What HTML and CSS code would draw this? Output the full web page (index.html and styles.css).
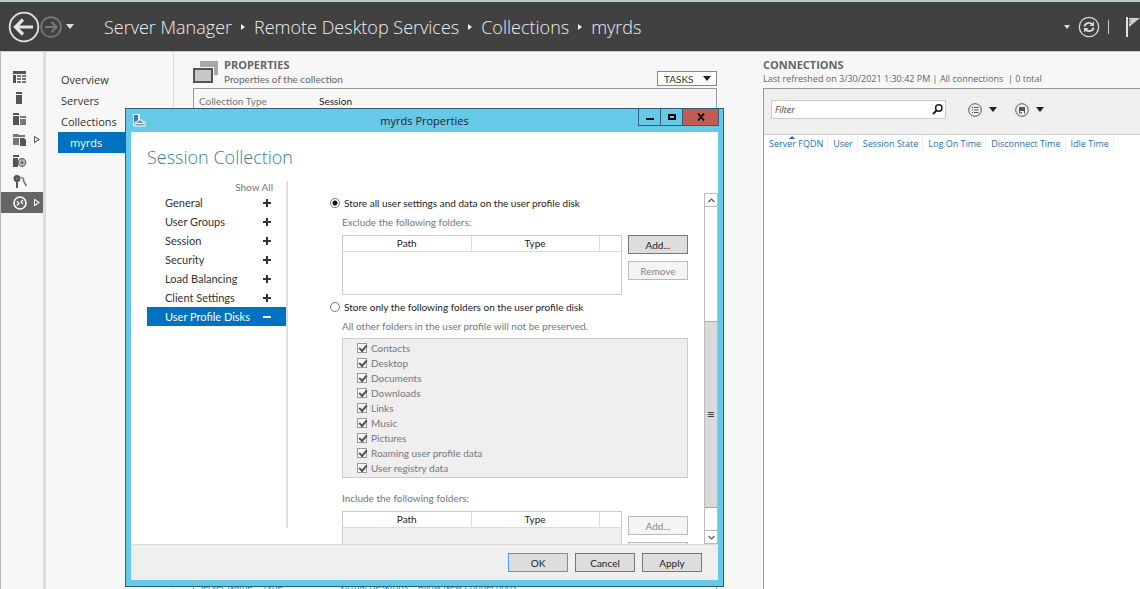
FILE: index.html
```html
<!DOCTYPE html>
<html lang="en">
<head>
  <meta charset="UTF-8">
  <title>Server Manager</title>
  <link rel="stylesheet" href="styles.css">
</head>
<body>
  <!-- Top bar -->
  <header class="topbar">
    <button class="icon-btn" aria-label="Back">
      <svg width="32" height="32" viewBox="0 0 32 32" fill="none" stroke="#e4e4e4">
        <circle cx="16" cy="16" r="14.3" stroke-width="1.8"/>
        <path d="M7.5 16H25M15 8.5L7.5 16l7.500 7.500" stroke-width="3.200"/>
      </svg>
    </button>
    <button class="icon-btn" aria-label="Forward">
      <svg width="22" height="22" viewBox="0 0 20 20" fill="none" stroke="#777">
        <circle cx="10" cy="10" r="9" stroke-width="1.600"/>
        <path d="M4.500 10h10.500M10.500 5.500L15 10l-4.500 4.500" stroke-width="2"/>
      </svg>
    </button>
    <button class="icon-btn history" aria-label="History"><i class="caret light"></i></button>
    <nav class="crumbs">
      <a href="#">Server Manager</a><i class="crumb-arrow"></i>
      <a href="#">Remote Desktop Services</a><i class="crumb-arrow"></i>
      <a href="#">Collections</a><i class="crumb-arrow"></i>
      <a href="#">myrds</a>
    </nav>
    <div class="top-tools">
      <i class="caret light small"></i>
      <button class="icon-btn" aria-label="Refresh">
        <svg width="22" height="22" viewBox="0 0 22 22" fill="none" stroke="#d8d8d8">
          <circle cx="11" cy="11" r="9.700" stroke-width="1.300"/>
          <path d="M6.500 10.500c.5-3.500 5-5 8-2M15.500 11.500c-.5 3.500-5 5-8 2" stroke-width="1.900"/>
          <path d="M16 5.500v4.500h-4.500zM6 16.500V12h4.500z" fill="#d8d8d8" stroke="none"/>
        </svg>
      </button>
      <span class="divider"></span>
      <button class="icon-btn flag" aria-label="Notifications">
        <svg width="14" height="20" viewBox="0 0 14 20">
          <path d="M1 0v20" stroke="#e0e0e0" stroke-width="2"/>
          <path d="M3 1h11L3 10z" fill="#d0d0d0"/>
          <path d="M4 2v5" stroke="#777"/>
        </svg>
      </button>
    </div>
  </header>

  <main class="workspace">
    <!-- Icon rail -->
    <nav class="rail">
      <a href="#" aria-label="Dashboard"><svg width="14" height="12" viewBox="0 0 14 12" fill="#555"><path d="M0 0h13v3H0zM0 4h3v8H0z"/><path fill="#777" d="M4 4h4v2H4zM9 4h4v2H9zM4 7h4v2H4zM9 7h4v2H9zM4 10h4v2H4zM9 10h4v2H9z"/></svg></a>
      <a href="#" aria-label="Local Server"><svg width="14" height="12" viewBox="0 0 14 12" fill="#555"><path d="M3 0h6v2H3zM3 3h6v9H3z"/></svg></a>
      <a href="#" aria-label="All Servers"><svg width="14" height="12" viewBox="0 0 14 12" fill="#555"><path d="M0 0h6v2H0zM0 3h6v9H0z"/><path fill="#777" d="M7 3h6v2H7zM7 6h6v6H7z"/></svg></a>
      <a href="#" aria-label="File and Storage Services"><svg width="14" height="12" viewBox="0 0 14 12" fill="#777"><path d="M0 0h5l1 1h6v2H0zM0 4h6v7H0z"/><path fill="#555" d="M7 4h4l2 2v6H7z"/></svg><i class="expand"></i></a>
      <a href="#" aria-label="IIS"><svg width="14" height="12" viewBox="0 0 14 12"><path fill="#555" d="M0 0h6v2H0zM0 3h5v9H0z"/><circle cx="9" cy="7.500" r="3.800" fill="#bbb" stroke="#666" stroke-width="1.200"/><circle cx="9" cy="7.500" r="1.500" fill="#666"/></svg></a>
      <a href="#" aria-label="Policies"><svg width="14" height="13" viewBox="0 0 14 13" fill="none" stroke="#555"><circle cx="4" cy="3.500" r="2" stroke-width="3"/><path d="M4 5v8" stroke-width="2"/><path d="M8 2l2.500 2v2l3 5" stroke="#777" stroke-width="1.600"/></svg></a>
      <a href="#" class="active" aria-label="Remote Desktop Services"><svg width="14" height="14" viewBox="0 0 14 14" fill="none" stroke="#fff"><circle cx="7" cy="7" r="6" stroke-width="1.600"/><path d="M4 5.500L6 7.500 4 9.500M10 4L8 6l2 2" stroke-width="1.200"/></svg><i class="expand"></i></a>
    </nav>

    <nav class="sidenav">
      <a href="#">Overview</a>
      <a href="#">Servers</a>
      <a href="#">Collections</a>
      <a href="#" class="active">myrds</a>
    </nav>

    <!-- Properties tile -->
    <section class="properties">
      <div class="tile-head">
        <svg class="tile-icon" width="26" height="23" viewBox="0 0 26 23">
          <path d="M7 0h18v14H7z" fill="#a8a8a8"/>
          <path d="M1 8h18v13H1z" fill="#c8c8c8" stroke="#f7f7f7" stroke-width="4"/>
          <path d="M1 8h18v13H1z" fill="#c8c8c8" stroke="#555" stroke-width="2"/>
        </svg>
        <div class="tile-title">
          <h2>PROPERTIES</h2>
          <p>Properties of the collection</p>
        </div>
        <button class="tasks">TASKS <i class="caret"></i></button>
      </div>
      <div class="tile-box">
        <dl class="facts">
          <dt>Collection Type</dt>
          <dd>Session</dd>
        </dl>
        <div class="host-head">
          <span>Server Name</span><span class="wide">Type</span><span>Virtual Desktops</span><span>Allow New Connections</span>
        </div>
      </div>
    </section>

    <!-- Connections tile -->
    <section class="connections">
      <div class="tile-title">
        <h2>CONNECTIONS</h2>
        <p>Last refreshed on 3/30/2021 1:30:42 PM | All connections &nbsp;| 0 total</p>
      </div>
      <div class="conn-box">
        <div class="toolbar">
          <div class="filter">
            <input type="text" placeholder="Filter" aria-label="Filter">
            <svg width="11" height="11" viewBox="0 0 11 11" fill="none" stroke="#222"><circle cx="6.800" cy="4" r="3.200" stroke-width="1.500"/><path d="M4.500 6.500L1 10" stroke-width="2"/></svg>
          </div>
          <button class="icon-btn menu-btn" aria-label="View options">
            <svg width="14" height="14" viewBox="0 0 14 14" fill="none" stroke="#555"><circle cx="7" cy="7" r="6.300" stroke-width="1"/><path d="M4 4.500h1M6 4.500h4.500M4 7h1M6 7h4.500M4 9.500h1M6 9.500h4.500" stroke-width="1.200"/></svg>
            <i class="caret"></i>
          </button>
          <button class="icon-btn menu-btn" aria-label="Saved queries">
            <svg width="14" height="14" viewBox="0 0 14 14"><circle cx="7" cy="7" r="6.300" fill="none" stroke="#555"/><path d="M4 4h6v6.500H9V8H5v2.500H4zM5.500 9h1.500v1.500H5.500z" fill="#555"/></svg>
            <i class="caret"></i>
          </button>
        </div>
        <table class="conn-table">
          <thead>
            <tr>
              <th class="sorted">Server FQDN</th>
              <th>User</th>
              <th>Session State</th>
              <th>Log On Time</th>
              <th>Disconnect Time</th>
              <th>Idle Time</th>
            </tr>
          </thead>
        </table>
      </div>
    </section>
  </main>

  <!-- Properties dialog -->
  <div class="dialog" role="dialog" aria-labelledby="dialog-title">
    <div class="titlebar">
      <svg class="app-icon" width="13" height="13" viewBox="0 0 13 13">
        <path d="M0 0h7v12H0z" fill="#e8f4fb"/>
        <path d="M1 1h4v10H1z" fill="#2f7fc0"/>
        <path d="M2 12V8h2l1-2h4l1 2h2v4z" fill="#7d97a8" stroke="#fff" stroke-width="1"/>
        <path d="M3 9.500h8" stroke="#fff"/>
      </svg>
      <span id="dialog-title">myrds Properties</span>
      <div class="win-btns">
        <button aria-label="Minimize"><svg width="8" height="8" viewBox="0 0 8 8"><path d="M0 5h8v2H0z"/></svg></button>
        <button aria-label="Maximize"><svg width="8" height="8" viewBox="0 0 8 8"><path d="M1 2h6v4H1z" fill="none" stroke="#000" stroke-width="2"/></svg></button>
        <button class="close" aria-label="Close"><svg width="8" height="8" viewBox="0 0 8 8"><path d="M1 .5L7 7.500M7 .5L1 7.500" stroke="#000" stroke-width="1.800"/></svg></button>
      </div>
    </div>

    <div class="dialog-body">
      <h1>Session Collection</h1>
      <div class="columns">
        <nav class="steps">
          <a href="#" class="show-all">Show All</a>
          <a href="#">General <i class="plus"></i></a>
          <a href="#">User Groups <i class="plus"></i></a>
          <a href="#">Session <i class="plus"></i></a>
          <a href="#">Security <i class="plus"></i></a>
          <a href="#">Load Balancing <i class="plus"></i></a>
          <a href="#">Client Settings <i class="plus"></i></a>
          <a href="#" class="active">User Profile Disks <i class="plus minus"></i></a>
        </nav>

        <div class="pane">
          <div class="pane-content">
            <label class="option"><input type="radio" name="store" checked>Store all user settings and data on the user profile disk</label>
            <div class="group">
              <p>Exclude the following folders:</p>
              <div class="row">
                <div class="folder-list">
                  <table>
                    <thead><tr><th>Path</th><th>Type</th><th class="last"></th></tr></thead>
                  </table>
                </div>
                <div class="row-btns">
                  <button class="btn">Add...</button>
                  <button class="btn" disabled>Remove</button>
                </div>
              </div>
            </div>
            <label class="option"><input type="radio" name="store">Store only the following folders on the user profile disk</label>
            <div class="group">
              <p>All other folders in the user profile will not be preserved.</p>
              <div class="checks">
                <label><input type="checkbox" checked disabled>Contacts</label>
                <label><input type="checkbox" checked disabled>Desktop</label>
                <label><input type="checkbox" checked disabled>Documents</label>
                <label><input type="checkbox" checked disabled>Downloads</label>
                <label><input type="checkbox" checked disabled>Links</label>
                <label><input type="checkbox" checked disabled>Music</label>
                <label><input type="checkbox" checked disabled>Pictures</label>
                <label><input type="checkbox" checked disabled>Roaming user profile data</label>
                <label><input type="checkbox" checked disabled>User registry data</label>
              </div>
              <p class="include">Include the following folders:</p>
              <div class="row">
                <div class="folder-list off">
                  <table>
                    <thead><tr><th>Path</th><th>Type</th><th class="last"></th></tr></thead>
                  </table>
                </div>
                <div class="row-btns lower">
                  <button class="btn" disabled>Add...</button>
                  <button class="btn" disabled aria-label="Remove"></button>
                </div>
              </div>
            </div>
          </div>
          <div class="scrollbar">
            <button aria-label="Scroll up"><svg width="7" height="5" viewBox="0 0 7 5" fill="none" stroke="#555"><path d="M.5 4l3-3 3 3" stroke-width="1.200"/></svg></button>
            <div class="track"><div class="thumb"><i></i></div></div>
            <button aria-label="Scroll down"><svg width="7" height="5" viewBox="0 0 7 5" fill="none" stroke="#555"><path d="M.5 1l3 3 3-3" stroke-width="1.200"/></svg></button>
          </div>
        </div>
      </div>
    </div>

    <div class="dialog-footer">
      <button class="btn primary">OK</button>
      <button class="btn">Cancel</button>
      <button class="btn">Apply</button>
    </div>
  </div>
</body>
</html>
```
FILE: styles.css
```css
* {
  box-sizing: border-box;
}

body {
  margin: 0;
  height: 100vh;
  display: flex;
  flex-direction: column;
  overflow: hidden;
  position: relative;
  background: #f7f7f7;
  color: #333;
  font-family: Lato, "Open Sans", sans-serif;
  font-size: 10px;
  line-height: 14px;
}

h1, h2, .crumbs, .sidenav, .titlebar, .connections, .host-head {
  font-family: "Open Sans", "Noto Sans", sans-serif;
}

h1, h2, p, dl, dd {
  margin: 0;
}

a {
  color: inherit;
  text-decoration: none;
}

button, input {
  font: inherit;
  color: inherit;
}

.icon-btn {
  display: flex;
  align-items: center;
  padding: 0;
  border: none;
  background: none;
}

.caret {
  border: 4px solid transparent;
  border-top: 5px solid #222;
  border-bottom: none;
}

.caret.light {
  border-top-color: #ddd;
}

.caret.small {
  border-width: 4px 3px 0;
}

/* Top bar */
.topbar {
  display: flex;
  align-items: center;
  flex: none;
  height: 52px;
  padding-left: 8px;
  background: #414141;
  border-top: 2px solid #b9cdd0;
  border-bottom: 1px solid #ccc;
  color: #eee;
}

.history {
  margin-left: 4px;
}

.crumbs {
  display: flex;
  align-items: center;
  margin-left: 30px;
  font-size: 18px;
  font-weight: 300;
  line-height: 24px;
  white-space: nowrap;
}

.crumb-arrow {
  margin: 0 9px;
  border: 3px solid transparent;
  border-left: 4px solid #eee;
  border-right: none;
}

.top-tools {
  display: flex;
  align-items: center;
  gap: 8px;
  margin-left: auto;
}

.divider {
  width: 1px;
  height: 14px;
  background: #ccc;
}

.flag {
  margin-left: 9px;
}

/* Left navigation */
.workspace {
  display: flex;
  flex: 1;
  min-height: 0;
}

.rail {
  flex: none;
  width: 46px;
  padding-top: 14px;
  border-left: 1px solid #bbb;
  border-right: 3px solid #ddd;
}

.rail a {
  display: flex;
  align-items: center;
  height: 21px;
  padding-left: 12px;
}

.rail .active {
  background: #666;
}

.expand {
  width: 6px;
  height: 8px;
  margin-left: 7px;
  background: #666;
  clip-path: polygon(0 0, 100% 50%, 0 100%, 0 0, 1px 2px, 1px 6px, 4px 4px, 1px 2px);
}

.active .expand {
  background: #fff;
}

.sidenav {
  flex: none;
  width: 128px;
  padding: 17px 0 0 12px;
  border-right: 1px solid #ddd;
  font-size: 11px;
}

.sidenav a {
  display: block;
  height: 21px;
  padding-left: 3px;
  line-height: 21px;
}

.sidenav .active {
  padding-left: 12px;
  background: #0072c0;
  color: #fff;
}

/* Tiles */
.properties {
  display: flex;
  flex-direction: column;
  flex: 0 0 543px;
  padding: 6px 0 0 19px;
}

.tile-head {
  display: flex;
  height: 30px;
}

.tile-icon {
  margin: 3px 5px 0 0;
}

.tile-title {
  height: 30px;
  color: #666;
  white-space: nowrap;
}

.tile-title h2 {
  font-size: 11px;
  line-height: 14px;
}

.tasks {
  display: flex;
  align-items: center;
  justify-content: space-between;
  width: 60px;
  height: 15px;
  margin: 13px 0 0 auto;
  padding: 0 5px 0 6px;
  border: 1px solid #888;
  background: #fff;
}

.tile-box {
  display: flex;
  flex-direction: column;
  justify-content: space-between;
  flex: 1;
  border: 1px solid #999;
  border-bottom: none;
}

.facts {
  display: flex;
  padding: 5px;
}

.facts dt {
  width: 120px;
  color: #777;
}

.facts dd {
  color: #222;
}

.host-head {
  display: flex;
  gap: 10px;
  height: 9px;
  padding-left: 4px;
  color: #2a6fa8;
  font-size: 9px;
}

.host-head .wide {
  width: 67px;
}

.connections {
  display: flex;
  flex-direction: column;
  flex: 1;
  min-width: 0;
  margin-left: 46px;
  padding-top: 6px;
  font-size: 9px;
}

.conn-box {
  flex: 1;
  border-top: 1px solid #999;
  border-left: 1px solid #999;
  background: #fff;
}

.toolbar {
  display: flex;
  align-items: center;
  gap: 18px;
  height: 46px;
  padding: 0 0 4px 7px;
  background: #efefef;
  border-bottom: 1px solid #ccc;
}

.filter {
  display: flex;
  align-items: center;
  width: 175px;
  height: 19px;
  margin-right: 4px;
  padding-right: 2px;
  border: 1px solid #ccc;
  background: #fff;
}

.filter input {
  flex: 1;
  min-width: 0;
  padding: 0 3px;
  border: none;
  background: none;
}

.filter input::placeholder {
  color: #444;
  font-style: italic;
}

.menu-btn {
  gap: 7px;
}

.conn-table {
  border-collapse: collapse;
}

.conn-table th {
  position: relative;
  height: 18px;
  padding: 0 4px 0 5px;
  border-right: 1px solid #eee;
  color: #1f6fb5;
  font-weight: normal;
  white-space: nowrap;
}

.sorted::before {
  content: "";
  position: absolute;
  top: 1px;
  left: 40%;
  border: 3px solid transparent;
  border-top: none;
  border-bottom-color: #1f6fb5;
}

/* Dialog */
.dialog {
  position: absolute;
  top: 108px;
  left: 125px;
  display: flex;
  flex-direction: column;
  width: 599px;
  height: 479px;
  padding: 0 5px 6px;
  border: 1px solid #2d5f75;
  background: #66c9e8;
}

.titlebar {
  display: flex;
  align-items: center;
  justify-content: center;
  position: relative;
  flex: none;
  height: 23px;
  color: #222;
  font-size: 11px;
}

.app-icon {
  position: absolute;
  top: 5px;
  left: 2px;
}

.win-btns {
  display: flex;
  position: absolute;
  top: -1px;
  right: -1px;
}

.win-btns button {
  display: flex;
  align-items: center;
  justify-content: center;
  width: 23px;
  height: 18px;
  margin-left: -1px;
  padding: 0;
  border: 1px solid #2d5f75;
  background: none;
}

.win-btns .close {
  width: 37px;
  background: #c35b54;
}

.dialog-body {
  display: flex;
  flex-direction: column;
  flex: 1;
  min-height: 0;
  padding-left: 16px;
  background: #fff;
}

h1 {
  padding: 13px 0 12px;
  color: #35809f;
  font-size: 18px;
  font-weight: 300;
  line-height: 24px;
}

.columns {
  display: flex;
  flex: 1;
  min-height: 0;
}

.steps {
  flex: none;
  width: 141px;
  margin-bottom: 16px;
  border-right: 2px solid #ddd;
  font-size: 11px;
}

.steps a {
  display: flex;
  align-items: center;
  justify-content: space-between;
  height: 19px;
  padding: 0 15px 0 18px;
}

.steps .show-all {
  justify-content: flex-end;
  height: 12px;
  padding-right: 13px;
  color: #777;
  font-size: 10px;
}

.steps .active {
  background: #0072c0;
  color: #fff;
}

.plus {
  width: 8px;
  height: 8px;
  background:
    linear-gradient(currentColor, currentColor) center / 8px 2px no-repeat,
    linear-gradient(currentColor, currentColor) center / 2px 8px no-repeat;
}

.plus.minus {
  background: linear-gradient(currentColor, currentColor) center / 8px 2px no-repeat;
}

.pane {
  display: flex;
  flex: 1;
  min-width: 0;
  margin-top: 12px;
  padding-left: 42px;
}

.pane-content {
  flex: 1;
  overflow: hidden;
  padding: 3px 16px 0 0;
}

.option {
  display: flex;
  align-items: center;
  height: 14px;
  color: #222;
}

.option input {
  appearance: none;
  width: 10px;
  height: 10px;
  margin: 0 4px 0 0;
  border: 1px solid #777;
  border-radius: 50%;
  background: #fff;
}

.option input:checked {
  background: radial-gradient(circle, #111 0 2px, #fff 3px);
}

.group {
  padding: 5px 0 5px 12px;
  color: #777;
}

.row {
  display: flex;
  gap: 6px;
  margin-top: 6px;
}

.folder-list {
  flex: 1;
  height: 60px;
  border: 1px solid #ccc;
  background: #fff;
}

.folder-list.off {
  background: #efefef;
}

.folder-list table {
  width: 100%;
  table-layout: fixed;
  border-collapse: collapse;
  background: #fff;
}

.folder-list th {
  height: 15px;
  padding: 0;
  border-right: 1px solid #ddd;
  border-bottom: 1px solid #ddd;
  color: #222;
  font-weight: normal;
}

.folder-list .last {
  width: 22px;
  border-right: none;
}

.row-btns {
  display: flex;
  flex-direction: column;
  gap: 7px;
}

.row-btns.lower {
  padding-top: 5px;
}

.btn {
  flex: none;
  width: 60px;
  height: 19px;
  padding: 0;
  border: 1px solid #777;
  background: #ddd;
  color: #222;
}

.btn:disabled {
  border-color: #bbb;
  background: #f4f4f4;
  color: #888;
}

.btn.primary {
  border-color: #4a9be0;
}

.checks {
  margin-top: 5px;
  padding: 1px 0 2px 14px;
  border: 1px solid #ccc;
  background: #efefef;
}

.checks label {
  display: flex;
  align-items: center;
  height: 15px;
}

.checks input {
  appearance: none;
  width: 10px;
  height: 10px;
  margin: 0 4px 0 0;
  border: 1px solid #999;
  background: #fafafa;
}

.checks input::before {
  content: "";
  display: block;
  width: 6px;
  height: 3px;
  margin: 1px;
  border: solid #555;
  border-width: 0 0 2px 2px;
  transform: rotate(-48deg);
}

.include {
  margin-top: 13px;
}

/* Scroll bar */
.scrollbar {
  display: flex;
  flex-direction: column;
  flex: none;
  width: 14px;
  border: 1px solid #bbb;
  background: #fff;
}

.scrollbar button {
  display: flex;
  align-items: center;
  justify-content: center;
  flex: none;
  height: 13px;
  padding: 0;
  border: none;
  background: #fff;
}

.scrollbar button:first-child {
  border-bottom: 1px solid #bbb;
}

.scrollbar button:last-child {
  border-top: 1px solid #bbb;
}

.track {
  display: flex;
  flex-direction: column;
  justify-content: flex-end;
  flex: 1;
  padding-bottom: 22px;
}

.thumb {
  display: flex;
  align-items: center;
  justify-content: center;
  height: 62%;
  border: 1px solid #aaa;
  border-width: 1px 0;
  background: #dadada;
}

.thumb i {
  width: 6px;
  height: 6px;
  background: repeating-linear-gradient(#444 0 1px, #dadada 1px 2px);
}

.dialog-footer {
  display: flex;
  justify-content: flex-end;
  gap: 7px;
  flex: none;
  height: 36px;
  padding: 8px 16px 0;
  border-top: 1px solid #ddd;
  background: #efefef;
}
```
